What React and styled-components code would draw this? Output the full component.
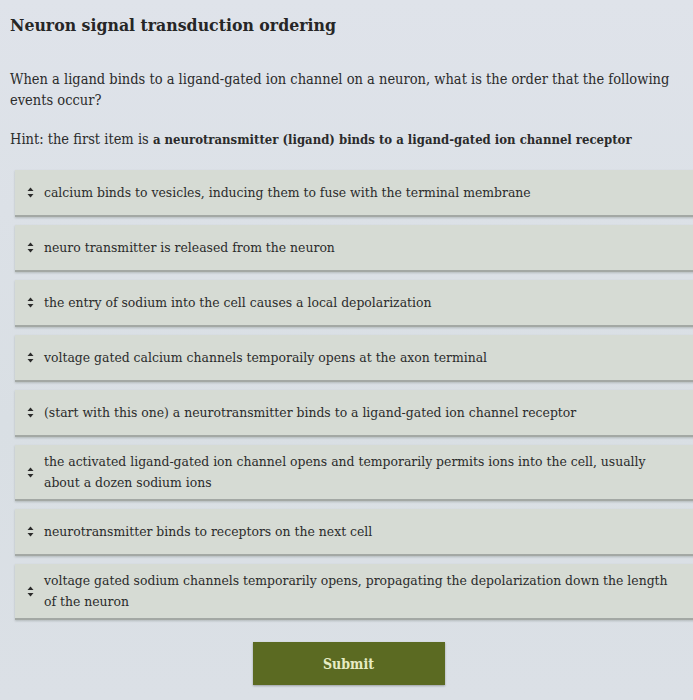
import React from "react";
import styled, { createGlobalStyle } from "styled-components";

const items = [
  "calcium binds to vesicles, inducing them to fuse with the terminal membrane",
  "neuro transmitter is released from the neuron",
  "the entry of sodium into the cell causes a local depolarization",
  "voltage gated calcium channels temporaily opens at the axon terminal",
  "(start with this one) a neurotransmitter binds to a ligand-gated ion channel receptor",
  "the activated ligand-gated ion channel opens and temporarily permits ions into the cell, usually about a dozen sodium ions",
  "neurotransmitter binds to receptors on the next cell",
  "voltage gated sodium channels temporarily opens, propagating the depolarization down the length of the neuron",
];

const SortIcon = () => (
  <svg width="7" height="11" viewBox="0 0 7 11">
    <path d="M3.5 0.5 L6.5 4 L0.5 4 Z" fill="#2b2b2b" />
    <path d="M3.5 10.5 L6.5 7 L0.5 7 Z" fill="#2b2b2b" />
  </svg>
);

const App = () => {
  return (
    <PAGE>
      <GlobalStyle />
      <TITLE>Neuron signal transduction ordering</TITLE>
      <QUESTION>
        When a ligand binds to a ligand-gated ion channel on a neuron, what is
        the order that the following events occur?
      </QUESTION>
      <HINT>
        Hint: the first item is{" "}
        <b>a neurotransmitter (ligand) binds to a ligand-gated ion channel receptor</b>
      </HINT>
      <LIST>
        {items.map((text, i) => (
          <CARD key={i}>
            <HANDLE>
              <SortIcon />
            </HANDLE>
            <LABEL>{text}</LABEL>
          </CARD>
        ))}
      </LIST>
      <FOOTER>
        <SUBMIT>Submit</SUBMIT>
      </FOOTER>
    </PAGE>
  );
};

const GlobalStyle = createGlobalStyle`
  html, body {
    margin: 0;
    padding: 0;
    overflow: hidden;
    background: #dce1e7;
  }
`;

const PAGE = styled.div`
  width: 693px;
  height: 700px;
  box-sizing: border-box;
  padding: 12px 0 0 10px;
  font-family: "DejaVu Serif Condensed", "DejaVu Serif", serif;
  color: #2b2b2b;
  background: linear-gradient(180deg, #dfe3ea 0%, #d9dfe4 60%, #dbe0e6 100%);
`;

const TITLE = styled.h1`
  margin: 0;
  font-size: 17.5px;
  font-weight: bold;
  line-height: 26px;
  color: #262626;
`;

const QUESTION = styled.p`
  margin: 31px 0 0;
  font-size: 14.5px;
  line-height: 21px;
  padding-right: 8px;
`;

const HINT = styled.p`
  margin: 18px 0 0;
  font-size: 14.5px;
  line-height: 21px;
  white-space: nowrap;
  b {
    font-weight: bold;
    font-size: 13px;
  }
`;

const LIST = styled.div`
  display: flex;
  flex-direction: column;
  gap: 8px;
  margin: 20px -12px 0 5px;
`;

const CARD = styled.div`
  display: flex;
  align-items: center;
  gap: 10px;
  min-height: 47px;
  box-sizing: border-box;
  padding: 6px 24px 6px 12px;
  background: #d6dbd4;
  border-bottom: 2px solid #a3a8a4;
  box-shadow: 0 1px 2px rgba(60, 70, 60, 0.25);
`;

const HANDLE = styled.div`
  display: flex;
  align-items: center;
  flex-shrink: 0;
`;

const LABEL = styled.div`
  font-size: 13.8px;
  line-height: 21px;
`;

const FOOTER = styled.div`
  display: flex;
  justify-content: center;
  margin-top: 22px;
`;

const SUBMIT = styled.button`
  width: 192px;
  height: 43px;
  margin-left: -6px;
  border: none;
  background: #5b6a22;
  color: #e6ecc4;
  font-family: inherit;
  font-size: 14px;
  font-weight: bold;
  box-shadow: 0 1px 2px rgba(0, 0, 0, 0.3);
`;

export default App;
